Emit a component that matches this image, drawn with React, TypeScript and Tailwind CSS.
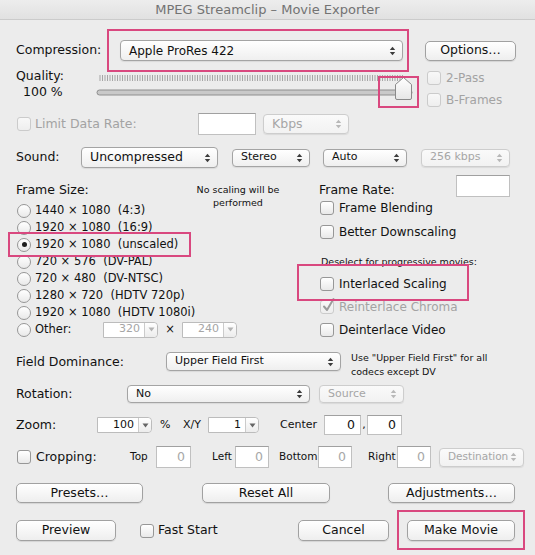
import clsx from "clsx";

// MPEG Streamclip – Movie Exporter dialog

function Arrows({ disabled }: { disabled?: boolean }) {
  return (
    <svg width="7" height="10" viewBox="0 0 7 10" className={clsx("shrink-0", disabled ? "text-[#b8b8b8]" : "text-[#3c3c3c]")}>
      <path d="M3.5 0.8 L6.2 4 H0.8 Z" fill="currentColor" />
      <path d="M3.5 9.2 L6.2 6 H0.8 Z" fill="currentColor" />
    </svg>
  );
}

function PopUp({ label, className, disabled }: { label: string; className?: string; disabled?: boolean }) {
  return (
    <div
      className={clsx(
        "flex items-center justify-between rounded-[4px] border bg-linear-to-b pl-[8px] pr-[6px] shadow-[0_1px_1px_rgba(0,0,0,0.08)]",
        disabled ? "border-[#cdcdcd] from-[#fafafa] to-[#f2f2f2] text-[#a6a6a6]" : "border-[#a4a4a4] from-white to-[#efefef] text-[#111]",
        className
      )}
    >
      <span className="whitespace-nowrap">{label}</span>
      <Arrows disabled={disabled} />
    </div>
  );
}

function Button({ label, className }: { label: string; className?: string }) {
  return (
    <button
      type="button"
      className={clsx(
        "flex items-center justify-center rounded-[5px] border border-[#a1a1a1] bg-linear-to-b from-white to-[#eeeeee] text-[12.5px] text-[#111] shadow-[0_1px_1px_rgba(0,0,0,0.1)]",
        className
      )}
    >
      {label}
    </button>
  );
}

function Check({ checked, disabled }: { checked?: boolean; disabled?: boolean }) {
  return (
    <span
      className={clsx(
        "relative ml-[1px] inline-flex h-[14px] w-[14px] shrink-0 rounded-[3px] border bg-linear-to-b",
        disabled ? "border-[#cbcbcb] from-[#f8f8f8] to-[#eeeeee]" : "border-[#979797] from-white to-[#e9e9e9]"
      )}
    >
      {checked && (
        <svg width="14" height="16" viewBox="0 0 14 16" className="absolute -top-[4px] left-[1px] overflow-visible">
          <path d="M2 9.5 L5 13 L11.5 2" fill="none" stroke={disabled ? "#9c9c9c" : "#222"} strokeWidth="2" strokeLinecap="round" strokeLinejoin="round" />
        </svg>
      )}
    </span>
  );
}

function CheckRow({ label, checked, disabled, className }: { label: string; checked?: boolean; disabled?: boolean; className?: string }) {
  return (
    <div className={clsx("flex h-[20px] items-center gap-[5px] text-[12px]", disabled ? "text-[#a3a3a3]" : "text-[#111]", className)}>
      <Check checked={checked} disabled={disabled} />
      <span>{label}</span>
    </div>
  );
}

function Radio({ selected }: { selected?: boolean }) {
  return (
    <span className="ml-[1px] flex h-[14px] w-[14px] shrink-0 items-center justify-center rounded-full border border-[#979797] bg-linear-to-b from-white to-[#e9e9e9]">
      {selected && <span className="h-[5px] w-[5px] rounded-full bg-[#1e1e1e]" />}
    </span>
  );
}

function RadioRow({ label, selected }: { label: string; selected?: boolean }) {
  return (
    <div className="flex h-[17px] items-center gap-[4px] text-[11.5px]">
      <Radio selected={selected} />
      <span className="whitespace-pre">{label}</span>
    </div>
  );
}

function Combo({ value, className, disabled }: { value: string; className?: string; disabled?: boolean }) {
  return (
    <div className={clsx("flex h-[16px] shrink-0 items-stretch rounded-r-[4px] border border-[#bcbcbc] bg-white text-[11px]", className)}>
      <span className={clsx("flex flex-1 items-center justify-end pr-[4px]", disabled ? "text-[#a5a5a5]" : "text-[#111]")}>{value}</span>
      <span className="flex w-[13px] items-center justify-center rounded-r-[4px] border-l border-[#cbcbcb] bg-linear-to-b from-white to-[#ececec]">
        <svg width="7" height="5" viewBox="0 0 7 5">
          <path d="M0.5 0.5 H6.5 L3.5 4.5 Z" fill={disabled ? "#b3b3b3" : "#666"} />
        </svg>
      </span>
    </div>
  );
}

function Field({ value, className, disabled }: { value?: string; className?: string; disabled?: boolean }) {
  return (
    <div
      className={clsx(
        "flex shrink-0 items-center justify-end border border-[#c0c0c0] border-t-[#a0a0a0] bg-white pr-[5px] text-[12.5px]",
        disabled ? "text-[#a8a8a8]" : "text-[#111]",
        className
      )}
    >
      {value}
    </div>
  );
}

function Slider() {
  const ticks = Array.from({ length: 122 }, (_, i) => 4 + i * 2.5);
  return (
    <svg width="319" height="38" viewBox="0 0 319 38" className="shrink-0">
      <defs>
        <linearGradient id="knob" x1="0" y1="0" x2="0" y2="1">
          <stop offset="0" stopColor="#ffffff" />
          <stop offset="1" stopColor="#e6e6e6" />
        </linearGradient>
      </defs>
      {ticks.map((x) => (
        <line key={x} x1={x} y1="7" x2={x} y2="13" stroke="#9d9d9d" strokeWidth="0.9" />
      ))}
      <rect x="1" y="22" width="315" height="5" rx="2.5" fill="#c9c9c9" stroke="#8e8e8e" strokeWidth="1" />
      <path d="M299.5 30 V16.5 L307.5 9.5 L315.5 16.5 V30 Q315.5 31.5 314 31.5 H301 Q299.5 31.5 299.5 30 Z" fill="url(#knob)" stroke="#8a8a8a" strokeWidth="1" />
    </svg>
  );
}

function Highlight({ className }: { className: string }) {
  return <div className={clsx("pointer-events-none absolute border-2 border-[#d9487f]", className)} />;
}

export default function App() {
  return (
    <div className="relative h-[555px] w-[535px] overflow-hidden bg-[#ececec] font-['DejaVu_Sans',sans-serif] text-[#111]">
      <div className="flex h-[20px] items-center justify-center border-b border-[#cbcbcb] bg-linear-to-b from-[#ededed] to-[#e1e1e1] text-[13px] text-[#737373]">
        MPEG Streamclip – Movie Exporter
      </div>

      <div className="pl-[16px]">
        {/* compression */}
        <div className="mt-[20px] flex h-[21px] items-center">
          <span className="w-[104px] text-[12.5px]">Compression:</span>
          <PopUp label="Apple ProRes 422" className="h-[21px] w-[283px] text-[12px]" />
          <Button label="Options…" className="ml-[22px] h-[20px] w-[91px]" />
        </div>

        {/* quality */}
        <div className="mt-[7px] flex h-[38px] items-start">
          <div className="w-[80px] text-[12.5px] leading-[16px]">
            <div>Quality:</div>
            <div className="pl-[7px]">100 %</div>
          </div>
          <Slider />
          <div className="ml-[11px] flex flex-col gap-[2px]">
            <CheckRow label="2-Pass" disabled className="h-[18px]" />
            <CheckRow label="B-Frames" disabled className="h-[18px]" />
          </div>
        </div>

        {/* limit data rate */}
        <div className="mt-[7px] flex h-[22px] items-center">
          <div className="flex w-[182px] items-center gap-[4px] text-[12.5px] text-[#a3a3a3]">
            <Check disabled />
            <span>Limit Data Rate:</span>
          </div>
          <Field className="h-[22px] w-[58px]" />
          <PopUp label="Kbps" disabled className="ml-[7px] h-[20px] w-[86px] text-[12.5px]" />
        </div>

        {/* sound */}
        <div className="mt-[12px] flex h-[21px] items-center">
          <span className="w-[65px] text-[12.5px]">Sound:</span>
          <PopUp label="Uncompressed" className="h-[21px] w-[137px] text-[12.5px]" />
          <PopUp label="Stereo" className="ml-[14px] h-[18px] w-[78px] text-[11px]" />
          <PopUp label="Auto" className="ml-[13px] h-[18px] w-[84px] text-[11px]" />
          <PopUp label="256 kbps" disabled className="ml-[14px] h-[18px] w-[89px] text-[11px]" />
        </div>

        {/* frame size / frame rate */}
        <div className="mt-[7px] flex">
          <div className="w-[303px]">
            <div className="flex">
              <div className="w-[164px]">
                <div className="h-[27px] pt-[7px] text-[12.5px] leading-[16px]">Frame Size:</div>
                <RadioRow label="1440 × 1080  (4:3)" />
                <RadioRow label="1920 × 1080  (16:9)" />
                <RadioRow label="1920 × 1080  (unscaled)" selected />
              </div>
              <div className="w-[116px] pt-[8px] text-center text-[9.5px] leading-[13px]">
                No scaling will be
                <br />
                performed
              </div>
            </div>
            <RadioRow label="720 × 576  (DV-PAL)" />
            <RadioRow label="720 × 480  (DV-NTSC)" />
            <RadioRow label="1280 × 720  (HDTV 720p)" />
            <RadioRow label="1920 × 1080  (HDTV 1080i)" />
            <div className="flex h-[17px] items-center text-[11.5px]">
              <Radio />
              <span className="ml-[4px] w-[68px]">Other:</span>
              <Combo value="320" disabled className="w-[55px]" />
              <span className="w-[24px] text-center">×</span>
              <Combo value="240" disabled className="w-[55px]" />
            </div>
          </div>

          <div className="w-[191px]">
            <div className="flex h-[23px] items-start justify-between">
              <span className="mt-[7px] text-[12.5px] leading-[16px]">Frame Rate:</span>
              <Field className="h-[22px] w-[54px]" />
            </div>
            <CheckRow label="Frame Blending" />
            <CheckRow label="Better Downscaling" className="mt-[4px]" />
            <div className="mt-[10px] h-[20px] pl-[2px] text-[9.5px] leading-[20px]">Deselect for progressive movies:</div>
            <CheckRow label="Interlaced Scaling" className="mt-[2px]" />
            <CheckRow label="Reinterlace Chroma" checked disabled className="mt-[3px]" />
            <CheckRow label="Deinterlace Video" className="mt-[3px]" />
          </div>
        </div>

        {/* field dominance */}
        <div className="mt-[12px] flex h-[19px] items-start">
          <span className="w-[150px] text-[12.5px] leading-[19px]">Field Dominance:</span>
          <PopUp label="Upper Field First" className="h-[19px] w-[175px] text-[11px]" />
          <div className="-mt-[1px] ml-[10px] text-[9.5px] leading-[14px]">
            Use "Upper Field First" for all
            <br />
            codecs except DV
          </div>
        </div>

        {/* rotation */}
        <div className="mt-[14px] flex h-[18px] items-center">
          <span className="w-[111px] text-[12.5px]">Rotation:</span>
          <PopUp label="No" className="h-[18px] w-[183px] text-[11px]" />
          <PopUp label="Source" disabled className="ml-[9px] h-[18px] w-[85px] text-[11px]" />
        </div>

        {/* zoom */}
        <div className="mt-[12px] flex h-[20px] items-center text-[11px]">
          <span className="w-[81px] shrink-0 text-[12.5px]">Zoom:</span>
          <Combo value="100" className="w-[55px]" />
          <span className="w-[31px] shrink-0 pl-[8px]">%</span>
          <span className="w-[25px] shrink-0">X/Y</span>
          <Combo value="1" className="w-[51px]" />
          <span className="ml-[21px] w-[44px] shrink-0">Center</span>
          <Field value="0" className="h-[20px] w-[37px]" />
          <span className="w-[6px] shrink-0 text-center">,</span>
          <Field value="0" className="h-[20px] w-[35px]" />
        </div>

        {/* cropping */}
        <div className="mt-[11px] flex h-[22px] items-center text-[10.5px]">
          <div className="flex w-[114px] shrink-0 items-center gap-[5px] text-[12.5px]">
            <Check />
            <span>Cropping:</span>
          </div>
          <span className="w-[26px] shrink-0">Top</span>
          <Field value="0" disabled className="h-[22px] w-[35px]" />
          <span className="ml-[21px] w-[23px] shrink-0">Left</span>
          <Field value="0" disabled className="h-[22px] w-[34px]" />
          <span className="ml-[10px] w-[39px] shrink-0">Bottom</span>
          <Field value="0" disabled className="h-[22px] w-[34px]" />
          <span className="ml-[16px] w-[29px] shrink-0">Right</span>
          <Field value="0" disabled className="h-[22px] w-[34px]" />
          <PopUp label="Destination" disabled className="ml-[8px] h-[19px] w-[85px] shrink-0 pl-[7px] pr-[5px] text-[10.5px]" />
        </div>

        {/* presets row */}
        <div className="mt-[15px] flex h-[20px] items-center">
          <Button label="Presets…" className="h-[20px] w-[127px]" />
          <Button label="Reset All" className="ml-[59px] h-[20px] w-[128px]" />
          <Button label="Adjustments…" className="ml-[58px] h-[20px] w-[127px]" />
        </div>

        {/* bottom row */}
        <div className="mt-[17px] flex h-[21px] w-[499px] items-center">
          <Button label="Preview" className="h-[21px] w-[100px]" />
          <div className="ml-[23px] flex items-center gap-[4px] text-[12.5px]">
            <Check />
            <span>Fast Start</span>
          </div>
          <Button label="Cancel" className="ml-auto h-[21px] w-[91px]" />
          <Button label="Make Movie" className="ml-[18px] h-[21px] w-[108px]" />
        </div>
      </div>

      <Highlight className="left-[107px] top-[29px] h-[43px] w-[302px]" />
      <Highlight className="left-[378px] top-[76px] h-[32px] w-[41px]" />
      <Highlight className="left-[8px] top-[232px] h-[25px] w-[183px]" />
      <Highlight className="left-[297px] top-[264px] h-[37px] w-[172px]" />
      <Highlight className="left-[397px] top-[510px] h-[40px] w-[128px]" />
    </div>
  );
}
